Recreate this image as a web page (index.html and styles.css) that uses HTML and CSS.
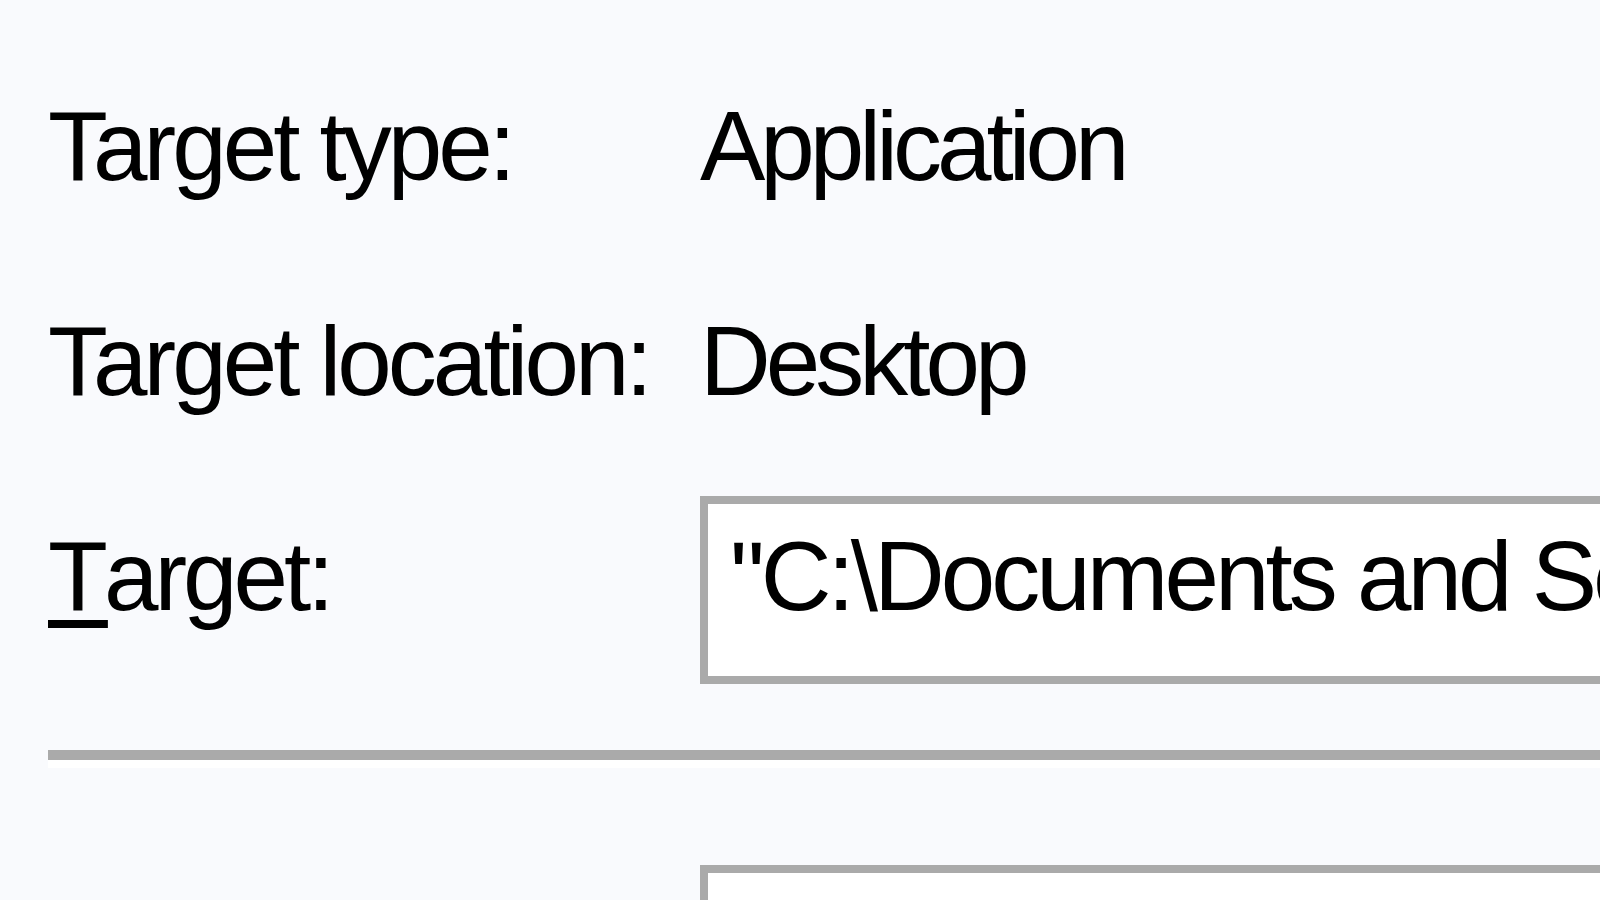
FILE: index.html
```html
<!DOCTYPE html>
<html lang="en">
<head>
<meta charset="utf-8">
<title>Shortcut Properties</title>
<link rel="stylesheet" href="styles.css">
</head>
<body>
<div class="page">
  <div class="row r1">
    <span class="label">Target type:</span>
    <span class="value">Application</span>
  </div>
  <div class="row r2">
    <span class="label">Target location:</span>
    <span class="value">Desktop</span>
  </div>
  <div class="row r3">
    <label class="label" for="target"><span class="key">T</span>arget:</label>
    <div class="textbox" id="target">"C:\Documents and Settings\All Users\Start Menu\Programs\Application.exe"</div>
  </div>
  <div class="sep"></div>
  <div class="row r4">
    <span class="label"></span>
    <div class="textbox tall"></div>
  </div>
</div>
</body>
</html>
```

FILE: styles.css
```css
html, body {
  margin: 0;
  padding: 0;
  height: 100%;
}

body {
  background: #f9fafd;
  overflow: hidden;
  font-family: "Liberation Sans", Arial, sans-serif;
  font-size: 98px;
  line-height: 110px;
  letter-spacing: -5px;
  color: #000;
}

.page {
  padding: 91px 0 0 48px;
}

.row {
  display: grid;
  grid-template-columns: 652px 1fr;
  align-items: baseline;
}

.label,
.value {
  white-space: nowrap;
}

.label {
  letter-spacing: -4px;
}

.r2 {
  margin-top: 105px;
}

.r3 {
  margin-top: 80px;
}

.key {
  letter-spacing: 0;
  margin-right: -4px;
  text-decoration: underline;
  text-decoration-thickness: 8px;
  text-underline-offset: 10px;
  text-decoration-skip-ink: none;
}

.textbox {
  width: 1000px;
  box-sizing: border-box;
  background: #fff;
  border: 8px solid #aaaaaa;
  padding: 17px 0 45px 22px;
  letter-spacing: -4px;
  white-space: nowrap;
  overflow: hidden;
}

.tall {
  height: 200px;
}

.sep {
  margin-top: 66px;
  height: 0;
  border-top: 10px solid #aaaaaa;
  border-bottom: 8px solid #ffffff;
}

.r4 {
  margin-top: 97px;
}
```
